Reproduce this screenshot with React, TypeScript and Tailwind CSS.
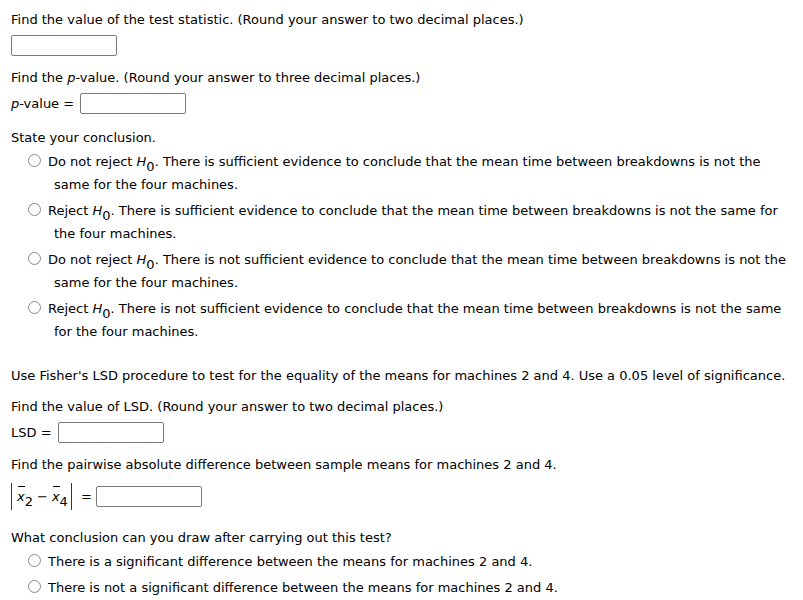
import React from 'react'

const Box: React.FC<{ className?: string }> = ({ className = '' }) => (
  <span className={`inline-block w-[106px] h-[21px] border border-[#7a7a7a] rounded-[2px] bg-white align-middle ${className}`} />
)

const Radio: React.FC = () => (
  <span className="inline-block w-[13px] h-[13px] rounded-full border border-[#8a8a8a] bg-white shrink-0 mt-[4px]" />
)

const H0 = () => (
  <>
    <i>H</i>
    <sub className="text-[13px] relative top-[5px] align-baseline">0</sub>
  </>
)

const Option: React.FC<{ children: React.ReactNode }> = ({ children }) => (
  <div className="flex gap-[7px] pl-[28px] pr-2">
    <Radio />
    <div className="leading-[23px]">{children}</div>
  </div>
)

const XBar: React.FC<{ n: string }> = ({ n }) => (
  <span className="relative">
    <span className="absolute left-[1px] -top-[1px] w-[7px] border-t border-black" />
    <i>x</i>
    <sub className="text-[13px] relative top-[5px] align-baseline">{n}</sub>
  </span>
)

const App: React.FC = () => {
  const conclusions = [
    ['Do not reject ', '. There is sufficient evidence to conclude that the mean time between breakdowns is not the', 'same for the four machines.'],
    ['Reject ', '. There is sufficient evidence to conclude that the mean time between breakdowns is not the same for', 'the four machines.'],
    ['Do not reject ', '. There is not sufficient evidence to conclude that the mean time between breakdowns is not the', 'same for the four machines.'],
    ['Reject ', '. There is not sufficient evidence to conclude that the mean time between breakdowns is not the same', 'for the four machines.'],
  ]

  return (
    <div className="w-[803px] h-[600px] bg-white text-black text-[13px] font-['DejaVu_Sans',Verdana,sans-serif] pl-[11px] pt-[10px] overflow-hidden">
      <p className="leading-[20px]">Find the value of the test statistic. (Round your answer to two decimal places.)</p>
      <div className="mt-[5px]">
        <Box />
      </div>

      <p className="mt-[12px] leading-[20px]">Find the <i>p</i>-value. (Round your answer to three decimal places.)</p>
      <div className="mt-[5px] flex items-center gap-[6px]">
        <span><i>p</i>-value =</span>
        <Box />
      </div>

      <p className="mt-[14px] leading-[20px]">State your conclusion.</p>
      <div className="mt-[2px] flex flex-col gap-[3px] -ml-[11px]">
        {conclusions.map(([a, b, c], i) => (
          <Option key={i}>
            <div>{a}<H0 />{b}</div>
            <div className="pl-[6px]">{c}</div>
          </Option>
        ))}
      </div>

      <p className="mt-[23px] leading-[20px]">Use Fisher's LSD procedure to test for the equality of the means for machines 2 and 4. Use a 0.05 level of significance.</p>
      <p className="mt-[11px] leading-[20px]">Find the value of LSD. (Round your answer to two decimal places.)</p>
      <div className="mt-[5px] flex items-center gap-[6px]">
        <span>LSD =</span>
        <Box />
      </div>

      <p className="mt-[12px] leading-[20px]">Find the pairwise absolute difference between sample means for machines 2 and 4.</p>
      <div className="mt-[8px] flex items-center">
        <span className="flex items-center h-[27px] border-l border-r border-[#333] pl-[5px] pr-[3px]">
          <XBar n="2" />
          <span className="mx-[4px]">−</span>
          <XBar n="4" />
        </span>
        <span className="ml-[9px] mr-[4px]">=</span>
        <Box />
      </div>

      <p className="mt-[18px] leading-[20px]">What conclusion can you draw after carrying out this test?</p>
      <div className="mt-[2px] flex flex-col gap-[3px] -ml-[11px]">
        <Option>There is a significant difference between the means for machines 2 and 4.</Option>
        <Option>There is not a significant difference between the means for machines 2 and 4.</Option>
      </div>
    </div>
  )
}

export default App
